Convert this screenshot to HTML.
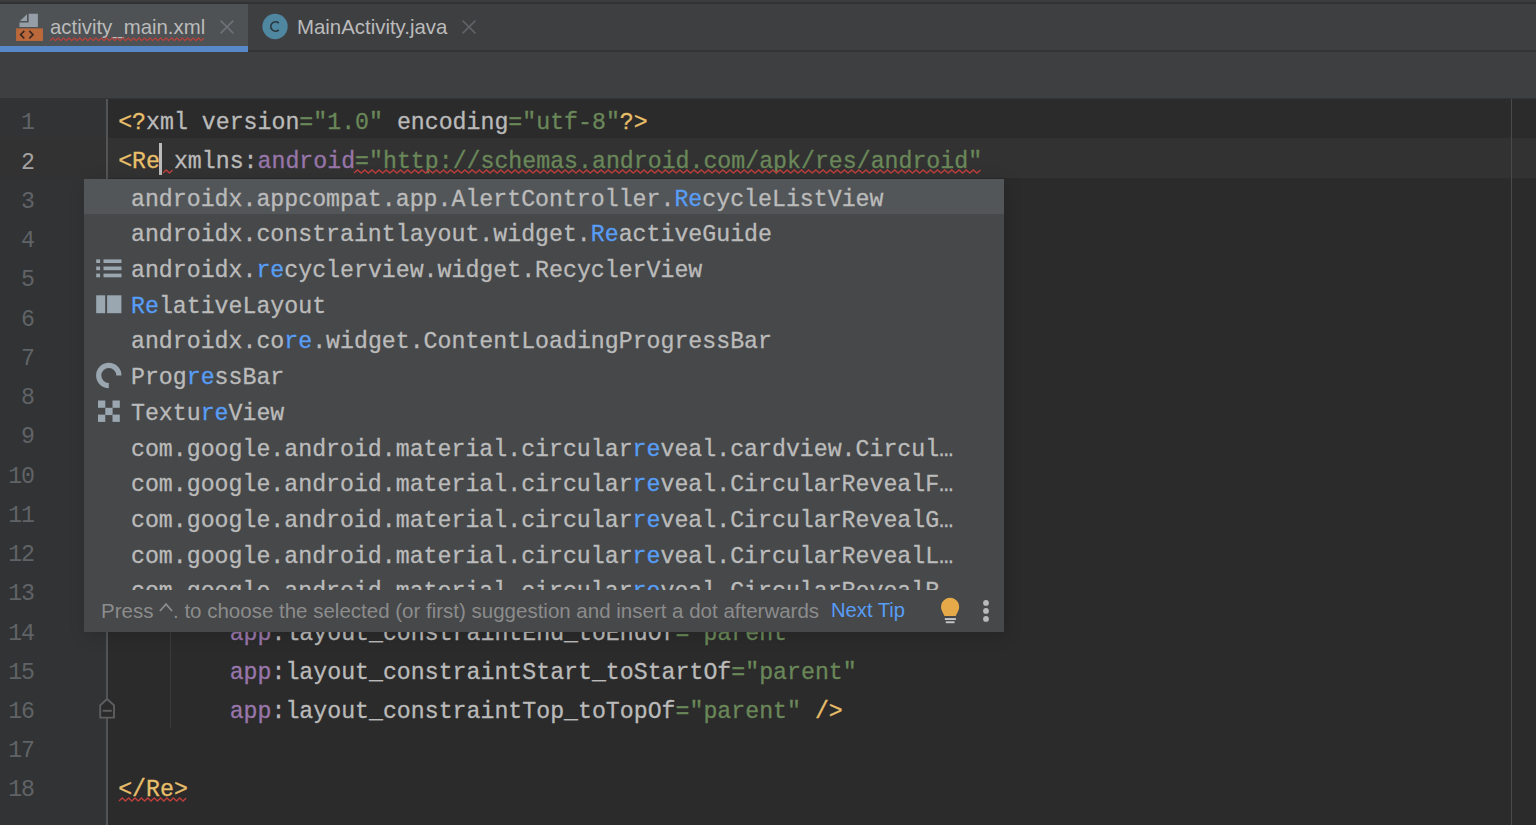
<!DOCTYPE html>
<html><head><meta charset="utf-8"><style>
*{margin:0;padding:0;box-sizing:border-box}
html,body{width:1536px;height:825px;overflow:hidden;background:#2b2b2b}
body{position:relative;font-family:"Liberation Sans",sans-serif}
.abs{position:absolute}
#topstrip{left:0;top:0;width:1536px;height:4px;background:linear-gradient(#3c3d3f 0,#3c3d3f 1.8px,#313234 2px,#313234 4px)}
#tabbar{left:0;top:4px;width:1536px;height:47px;background:#3e3f41}
#tabsel{left:0;top:4px;width:248px;height:42px;background:#4e5254}
#tabline{left:0;top:46px;width:248px;height:5.5px;background:#5888c8}
#tabborder{left:248px;top:50px;width:1288px;height:2px;background:#333436}
#toolbar{left:0;top:52px;width:1536px;height:47.4px;background:linear-gradient(#3e3f41 0,#3e3f41 45.8px,#313233 46.6px)}
.tabtxt{font-size:20.4px;color:#bbbbbb;top:16.3px;white-space:nowrap}
#gutter{left:0;top:99.4px;width:107px;height:726px;background:#313335}
#gline{left:106.3px;top:99.4px;width:1.4px;height:726px;background:#525456}
#editor{left:107.7px;top:99.4px;width:1429px;height:726px;background:#2b2b2b}
#caretrow{left:0px;top:138.4px;width:1536px;height:39.8px;background:#323232}
#margin{left:1511px;top:99.4px;width:1.2px;height:726px;background:#4a4a4a}
.ln{position:absolute;left:0;width:33.6px;letter-spacing:-1.3px;text-align:right;font-family:"Liberation Mono",monospace;font-size:23.23px;color:#606366;line-height:39.24px;height:39.24px}
.code{position:absolute;-webkit-text-stroke:0.3px currentColor;left:118.2px;font-family:"Liberation Mono",monospace;font-size:23.23px;line-height:39.24px;height:39.24px;white-space:pre;color:#a9b7c6}
.t{color:#e8bf6a}.a{color:#bababa}.ns{color:#9876aa}.v{color:#6a8759}
#popup{left:84px;top:178.5px;width:920px;height:453.3px;background:#46484a;box-shadow:2px 3px 16px rgba(0,0,0,0.16);overflow:hidden}
#selrow{left:0;top:0;width:920px;height:35.6px;background:#535659}
.row{position:absolute;-webkit-text-stroke:0.3px currentColor;left:47px;font-family:"Liberation Mono",monospace;font-size:23.23px;line-height:35.72px;height:35.72px;white-space:pre;color:#bbbbbb}
.m{color:#589df6}
#list{left:0;top:0;width:920px;height:411px;overflow:hidden}
#footer{left:17px;top:420.3px;font-size:20.5px;color:#8c8c8c;white-space:nowrap}
#footer2{left:89px;top:420.3px;font-size:20.5px;color:#8c8c8c;white-space:nowrap}
#nexttip{left:747px;top:420.3px;font-size:20.2px;color:#589df6;white-space:nowrap}
.ic{fill:#9aa7b0}
</style></head><body>
<div id="topstrip" class="abs"></div><div id="tabbar" class="abs"></div><div id="tabsel" class="abs"></div><div id="tabline" class="abs"></div><div id="tabborder" class="abs"></div><div id="toolbar" class="abs"></div>
<svg class="abs" style="left:0;top:0" width="60" height="50" viewBox="0 0 60 50">
<path d="M28.67 13.8 H37.88 V26.9 H19.45 V22.5 H28.67 Z" fill="#959ea6"/>
<path d="M19.9 21.1 L27.0 14.3 L27.0 21.1 Z" fill="#959ea6"/>
<rect x="16.06" y="28.36" width="26.9" height="12.6" fill="#bb683b"/>
<path d="M24.3 30.9 L20.6 34.7 L24.3 38.5" fill="none" stroke="#3b2a22" stroke-width="1.7"/>
<path d="M29.3 30.9 L33.0 34.7 L29.3 38.5" fill="none" stroke="#3b2a22" stroke-width="1.7"/>
</svg>
<div class="abs tabtxt" style="left:50px">activity_main.xml</div>
<svg class="abs" style="left:50.00px;top:38.00px;overflow:visible" width="158.0" height="4.6"><polyline points="0.00,2.60 2.70,0.00 5.40,2.60 8.10,0.00 10.80,2.60 13.50,0.00 16.20,2.60 18.90,0.00 21.60,2.60 24.30,0.00 27.00,2.60 29.70,0.00 32.40,2.60 35.10,0.00 37.80,2.60 40.50,0.00 43.20,2.60 45.90,0.00 48.60,2.60 51.30,0.00 54.00,2.60 56.70,0.00 59.40,2.60 62.10,0.00 64.80,2.60 67.50,0.00 70.20,2.60 72.90,0.00 75.60,2.60 78.30,0.00 81.00,2.60 83.70,0.00 86.40,2.60 89.10,0.00 91.80,2.60 94.50,0.00 97.20,2.60 99.90,0.00 102.60,2.60 105.30,0.00 108.00,2.60 110.70,0.00 113.40,2.60 116.10,0.00 118.80,2.60 121.50,0.00 124.20,2.60 126.90,0.00 129.60,2.60 132.30,0.00 135.00,2.60 137.70,0.00 140.40,2.60 143.10,0.00 145.80,2.60 148.50,0.00 151.20,2.60 153.90,0.00" fill="none" stroke="#b4443f" stroke-width="1.3"/></svg>
<svg class="abs" style="left:219px;top:18.8px" width="16" height="16" viewBox="0 0 16 16"><path d="M1.6 1.6L14.4 14.4M14.4 1.6L1.6 14.4" stroke="#6c7277" stroke-width="1.6"/></svg>
<svg class="abs" style="left:250px;top:0" width="40" height="50" viewBox="0 0 40 50">
<circle cx="25.05" cy="26.5" r="12.65" fill="#4f87a0"/>
<path d="M28.7 23.0 A4.7 4.7 0 1 0 28.7 30.0" fill="none" stroke="#2a363d" stroke-width="1.7"/>
</svg>
<div class="abs tabtxt" style="left:297px">MainActivity.java</div>
<svg class="abs" style="left:461px;top:18.8px" width="16" height="16" viewBox="0 0 16 16"><path d="M1.6 1.6L14.4 14.4M14.4 1.6L1.6 14.4" stroke="#5f6366" stroke-width="1.6"/></svg>
<div id="gutter" class="abs"></div><div id="editor" class="abs"></div><div id="caretrow" class="abs"></div><div id="gline" class="abs"></div><div id="margin" class="abs"></div>
<div class="ln" style="top:104.40px;color:#606366">1</div>
<div class="ln" style="top:143.64px;color:#a4a3a3">2</div>
<div class="ln" style="top:182.88px;color:#606366">3</div>
<div class="ln" style="top:222.12px;color:#606366">4</div>
<div class="ln" style="top:261.36px;color:#606366">5</div>
<div class="ln" style="top:300.60px;color:#606366">6</div>
<div class="ln" style="top:339.84px;color:#606366">7</div>
<div class="ln" style="top:379.08px;color:#606366">8</div>
<div class="ln" style="top:418.32px;color:#606366">9</div>
<div class="ln" style="top:457.56px;color:#606366">10</div>
<div class="ln" style="top:496.80px;color:#606366">11</div>
<div class="ln" style="top:536.04px;color:#606366">12</div>
<div class="ln" style="top:575.28px;color:#606366">13</div>
<div class="ln" style="top:614.52px;color:#606366">14</div>
<div class="ln" style="top:653.76px;color:#606366">15</div>
<div class="ln" style="top:693.00px;color:#606366">16</div>
<div class="ln" style="top:732.24px;color:#606366">17</div>
<div class="ln" style="top:771.48px;color:#606366">18</div>
<div class="code" style="top:104.40px"><span class="t">&lt;?</span><span class="a">xml version</span><span class="v">="1.0"</span> <span class="a">encoding</span><span class="v">="utf-8"</span><span class="t">?&gt;</span></div>
<div class="code" style="top:142.84px"><span class="t">&lt;Re</span> <span class="a">xmlns:</span><span class="ns">android</span><span class="v">="http://schemas.android.com/apk/res/android"</span></div>
<div class="code" style="top:614.52px">        <span class="ns">app</span><span class="a">:layout_constraintEnd_toEndOf</span><span class="v">="parent"</span></div>
<div class="code" style="top:653.76px">        <span class="ns">app</span><span class="a">:layout_constraintStart_toStartOf</span><span class="v">="parent"</span></div>
<div class="code" style="top:693.00px">        <span class="ns">app</span><span class="a">:layout_constraintTop_toTopOf</span><span class="v">="parent"</span> <span class="t">/&gt;</span></div>
<div class="code" style="top:771.48px"><span class="t">&lt;/Re&gt;</span></div>
<div class="abs" style="left:159.2px;top:142.8px;width:3.2px;height:32.2px;background:#bbbbbb"></div>
<svg class="abs" style="left:162.50px;top:169.80px;overflow:visible" width="13.1" height="5.0"><polyline points="0.00,3.00 3.20,0.00 6.40,3.00 9.60,0.00" fill="none" stroke="#bc3f3c" stroke-width="1.4"/></svg>
<svg class="abs" style="left:353.60px;top:169.80px;overflow:visible" width="629.2" height="5.0"><polyline points="0.00,3.00 3.58,0.00 7.16,3.00 10.74,0.00 14.32,3.00 17.90,0.00 21.48,3.00 25.06,0.00 28.64,3.00 32.22,0.00 35.80,3.00 39.38,0.00 42.96,3.00 46.54,0.00 50.12,3.00 53.70,0.00 57.28,3.00 60.86,0.00 64.44,3.00 68.02,0.00 71.60,3.00 75.18,0.00 78.76,3.00 82.34,0.00 85.92,3.00 89.50,0.00 93.08,3.00 96.66,0.00 100.24,3.00 103.82,0.00 107.40,3.00 110.98,0.00 114.56,3.00 118.14,0.00 121.72,3.00 125.30,0.00 128.88,3.00 132.46,0.00 136.04,3.00 139.62,0.00 143.20,3.00 146.78,0.00 150.36,3.00 153.94,0.00 157.52,3.00 161.10,0.00 164.68,3.00 168.26,0.00 171.84,3.00 175.42,0.00 179.00,3.00 182.58,0.00 186.16,3.00 189.74,0.00 193.32,3.00 196.90,0.00 200.48,3.00 204.06,0.00 207.64,3.00 211.22,0.00 214.80,3.00 218.38,0.00 221.96,3.00 225.54,0.00 229.12,3.00 232.70,0.00 236.28,3.00 239.86,0.00 243.44,3.00 247.02,0.00 250.60,3.00 254.18,0.00 257.76,3.00 261.34,0.00 264.92,3.00 268.50,0.00 272.08,3.00 275.66,0.00 279.24,3.00 282.82,0.00 286.40,3.00 289.98,0.00 293.56,3.00 297.14,0.00 300.72,3.00 304.30,0.00 307.88,3.00 311.46,0.00 315.04,3.00 318.62,0.00 322.20,3.00 325.78,0.00 329.36,3.00 332.94,0.00 336.52,3.00 340.10,0.00 343.68,3.00 347.26,0.00 350.84,3.00 354.42,0.00 358.00,3.00 361.58,0.00 365.16,3.00 368.74,0.00 372.32,3.00 375.90,0.00 379.48,3.00 383.06,0.00 386.64,3.00 390.22,0.00 393.80,3.00 397.38,0.00 400.96,3.00 404.54,0.00 408.12,3.00 411.70,0.00 415.28,3.00 418.86,0.00 422.44,3.00 426.02,0.00 429.60,3.00 433.18,0.00 436.76,3.00 440.34,0.00 443.92,3.00 447.50,0.00 451.08,3.00 454.66,0.00 458.24,3.00 461.82,0.00 465.40,3.00 468.98,0.00 472.56,3.00 476.14,0.00 479.72,3.00 483.30,0.00 486.88,3.00 490.46,0.00 494.04,3.00 497.62,0.00 501.20,3.00 504.78,0.00 508.36,3.00 511.94,0.00 515.52,3.00 519.10,0.00 522.68,3.00 526.26,0.00 529.84,3.00 533.42,0.00 537.00,3.00 540.58,0.00 544.16,3.00 547.74,0.00 551.32,3.00 554.90,0.00 558.48,3.00 562.06,0.00 565.64,3.00 569.22,0.00 572.80,3.00 576.38,0.00 579.96,3.00 583.54,0.00 587.12,3.00 590.70,0.00 594.28,3.00 597.86,0.00 601.44,3.00 605.02,0.00 608.60,3.00 612.18,0.00 615.76,3.00 619.34,0.00 622.92,3.00 626.50,0.00" fill="none" stroke="#bc3f3c" stroke-width="1.4"/></svg>
<svg class="abs" style="left:118.70px;top:797.80px;overflow:visible" width="70.3" height="5.0"><polyline points="0.00,3.00 3.20,0.00 6.40,3.00 9.60,0.00 12.80,3.00 16.00,0.00 19.20,3.00 22.40,0.00 25.60,3.00 28.80,0.00 32.00,3.00 35.20,0.00 38.40,3.00 41.60,0.00 44.80,3.00 48.00,0.00 51.20,3.00 54.40,0.00 57.60,3.00 60.80,0.00 64.00,3.00 67.20,0.00" fill="none" stroke="#bc3f3c" stroke-width="1.4"/></svg>
<div class="abs" style="left:170.2px;top:632px;width:1px;height:96px;background:#3b3b3b"></div>
<svg class="abs" style="left:96px;top:694px" width="24" height="28" viewBox="0 0 24 28">
<path d="M4.2 11.2 L11.1 5.0 L18.0 11.2 V23.6 H4.2 Z" fill="#2b2b2b" stroke="#5c5e60" stroke-width="1.9"/>
<path d="M6.6 16.8 H15.8" stroke="#5c5e60" stroke-width="1.9"/>
</svg>
<div id="popup" class="abs"><div id="list" class="abs"><div id="selrow" class="abs"></div>
<div class="row" style="top:4.00px">androidx.appcompat.app.AlertController.<span class="m">Re</span>cycleListView</div>
<div class="row" style="top:39.72px">androidx.constraintlayout.widget.<span class="m">Re</span>activeGuide</div>
<div class="row" style="top:75.44px">androidx.<span class="m">re</span>cyclerview.widget.RecyclerView</div>
<div class="row" style="top:111.16px"><span class="m">Re</span>lativeLayout</div>
<div class="row" style="top:146.88px">androidx.co<span class="m">re</span>.widget.ContentLoadingProgressBar</div>
<div class="row" style="top:182.60px">Prog<span class="m">re</span>ssBar</div>
<div class="row" style="top:218.32px">Textu<span class="m">re</span>View</div>
<div class="row" style="top:254.04px">com.google.android.material.circular<span class="m">re</span>veal.cardview.Circul…</div>
<div class="row" style="top:289.76px">com.google.android.material.circular<span class="m">re</span>veal.CircularRevealF…</div>
<div class="row" style="top:325.48px">com.google.android.material.circular<span class="m">re</span>veal.CircularRevealG…</div>
<div class="row" style="top:361.20px">com.google.android.material.circular<span class="m">re</span>veal.CircularRevealL…</div>
<div class="row" style="top:396.92px">com.google.android.material.circular<span class="m">re</span>veal.CircularRevealR…</div>
<svg class="abs" style="left:0;top:0" width="60" height="260"><g class="ic"><rect x="12.20" y="80.40" width="3.90" height="3.60"/><rect x="19.50" y="80.40" width="18.00" height="3.60"/><rect x="12.20" y="87.50" width="3.90" height="3.70"/><rect x="19.50" y="87.50" width="18.00" height="3.70"/><rect x="12.20" y="94.60" width="3.90" height="3.70"/><rect x="19.50" y="94.60" width="18.00" height="3.70"/><rect x="12.20" y="116.30" width="9.00" height="17.90"/><rect x="23.10" y="116.30" width="14.30" height="17.90"/><rect x="14.00" y="221.50" width="7.30" height="7.30"/><rect x="28.50" y="221.50" width="7.30" height="7.30"/><rect x="21.30" y="228.80" width="7.30" height="7.30"/><rect x="14.00" y="235.60" width="7.30" height="7.30"/><rect x="28.50" y="235.60" width="7.30" height="7.30"/></g><path d="M34.90 196.50 A10.1 10.1 0 1 0 24.80 206.60" fill="none" stroke="#9aa7b0" stroke-width="5.2"/></svg>
</div>
<div id="footer" class="abs">Press</div>
<svg class="abs" style="left:74.60px;top:423.10px" width="14" height="10" viewBox="0 0 14 10"><path d="M0.9 9.0 L7 2.2 L13.1 9.0" fill="none" stroke="#8c8c8c" stroke-width="1.8"/></svg>
<div id="footer2" class="abs">. to choose the selected (or first) suggestion and insert a dot afterwards</div>
<div id="nexttip" class="abs">Next Tip</div>
<svg class="abs" style="left:0;top:0" width="920" height="453">
<path d="M860.50 436.90 L858.20 432.40 A9.1 9.1 0 1 1 874.00 432.40 L871.70 436.90 Z" fill="#e6a94a"/>
<rect x="860.80" y="439.10" width="11.1" height="1.9" fill="#c6c6c6"/>
<rect x="861.80" y="442.30" width="8.7" height="1.9" fill="#c6c6c6"/>
<circle cx="902.00" cy="423.90" r="2.9" fill="#b9b9b9"/>
<circle cx="902.00" cy="431.90" r="2.9" fill="#b9b9b9"/>
<circle cx="902.00" cy="439.90" r="2.9" fill="#b9b9b9"/>
</svg>
</div>
</body></html>
